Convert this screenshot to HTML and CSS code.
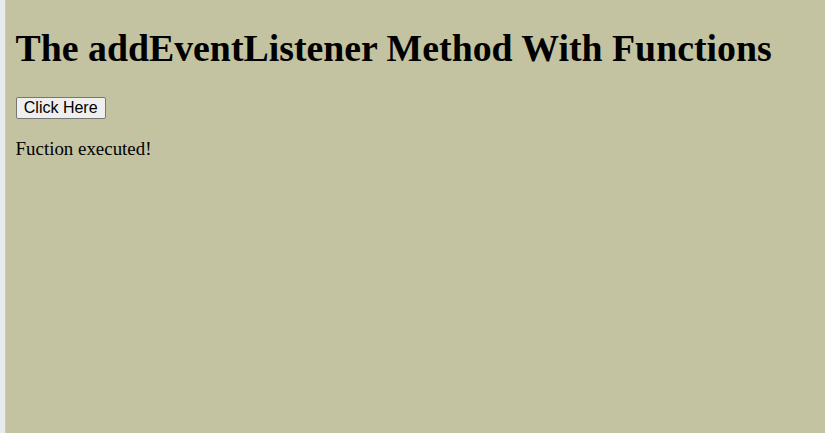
FILE: index.html
```html
<!DOCTYPE html>
<html>
<head>
<meta charset="utf-8">
<title>addEventListener</title>
<link rel="stylesheet" href="styles.css">
</head>
<body>
<div class="strip"></div>
<main class="page">
<h1 class="title">The addEventListener Method With Functions</h1>
<div class="row"><button class="btn" type="button">Click Here</button></div>
<p class="msg">Fuction executed!</p>
</main>
</body>
</html>
```

FILE: styles.css
```css
html, body {
  margin: 0;
  height: 100%;
}
body {
  display: flex;
  font-family: "Liberation Serif", "Times New Roman", serif;
  font-size: 19.2px;
  color: #000;
}
.strip {
  width: 5px;
  flex: none;
  background: #e6ebec;
  border-right: 1px solid #c9cbc6;
}
.page {
  flex: 1;
  background: #c3c3a2;
  padding: 0 9.6px;
  display: flow-root;
}
.title {
  font-size: 37.8px;
  font-weight: bold;
  margin: 25.9px 0;
}
.row {
  line-height: 1.149;
}
.btn {
  font-family: "Liberation Sans", Arial, sans-serif;
  font-size: 16px;
  padding: 1.2px 7.2px;
  background: #efefef;
  border: 1px solid #767676;
  border-radius: 2px;
  color: #000;
}
.msg {
  font-size: 18.9px;
  margin: 19.2px 0;
}
```
